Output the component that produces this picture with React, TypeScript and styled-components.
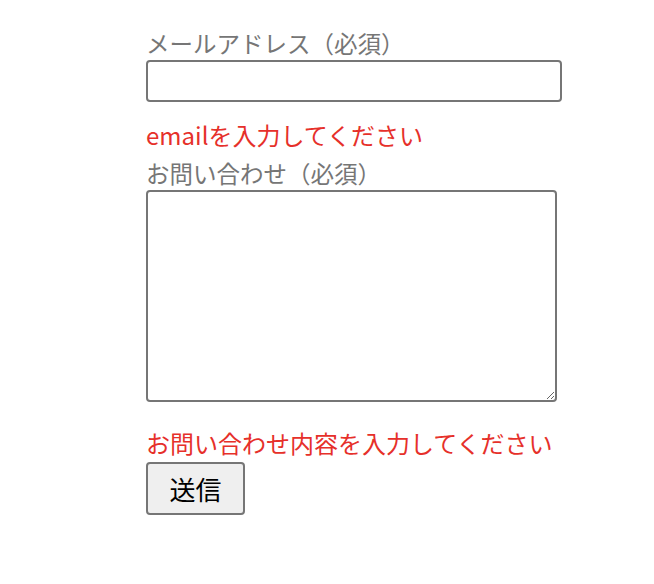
import React from "react";
import styled, { createGlobalStyle } from "styled-components";

const Global = createGlobalStyle`
  html, body { margin: 0; padding: 0; background: #ffffff; }
  body { font-family: "Noto Sans CJK JP", "Noto Sans", sans-serif; }
`;

const Form = styled.form`
  display: flex;
  flex-direction: column;
  align-items: flex-start;
  padding: 26px 0 0 146px;
`;

const Label = styled.label<{ $gap?: number }>`
  display: block;
  font-size: 23.5px;
  line-height: 34px;
  color: #767676;
  margin-top: ${(p) => p.$gap ?? 0}px;
`;

const TextInput = styled.input`
  box-sizing: border-box;
  width: 416px;
  height: 42px;
  border: 2px solid #767676;
  border-radius: 4px;
  background: #ffffff;
  font-size: 20px;
  padding: 0 8px;
  margin: 0;
  outline: none;
`;

const TextArea = styled.textarea`
  box-sizing: border-box;
  display: block;
  width: 411px;
  height: 212px;
  border: 2px solid #767676;
  border-radius: 4px;
  background: #ffffff;
  font-size: 20px;
  padding: 4px 8px;
  margin: 0;
  outline: none;
  resize: both;
`;

const ErrorText = styled.p<{ $gap: number }>`
  margin: ${(p) => p.$gap}px 0 0 0;
  font-size: 24px;
  line-height: 34px;
  color: #e6302a;
`;

const SubmitButton = styled.button<{ $gap: number }>`
  box-sizing: border-box;
  margin-top: ${(p) => p.$gap}px;
  width: 99px;
  height: 53px;
  border: 2px solid #767676;
  border-radius: 4px;
  background: #efefef;
  color: #000000;
  font-family: "Noto Sans CJK JP", "Noto Sans", sans-serif;
  font-size: 26px;
  line-height: 1;
  padding: 0;
  cursor: pointer;
`;

export default function App() {
  return (
    <>
      <Global />
      <Form onSubmit={(e) => e.preventDefault()}>
        <Label htmlFor="email">メールアドレス（必須）</Label>
        <TextInput id="email" type="email" />
        <ErrorText $gap={16}>emailを入力してください</ErrorText>
        <Label htmlFor="message" $gap={4}>
          お問い合わせ（必須）
        </Label>
        <TextArea id="message" />
        <ErrorText $gap={24}>お問い合わせ内容を入力してください</ErrorText>
        <SubmitButton type="submit" $gap={2}>
          送信
        </SubmitButton>
      </Form>
    </>
  );
}
